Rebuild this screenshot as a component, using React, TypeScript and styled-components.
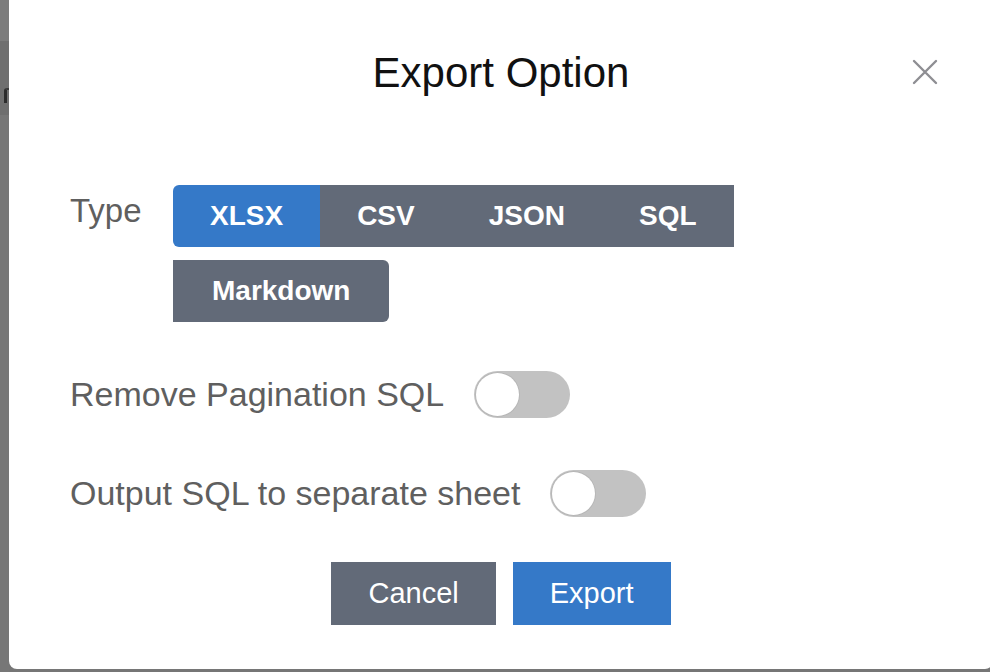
import React, { useState } from 'react';
import styled, { createGlobalStyle } from 'styled-components';

const GlobalStyle = createGlobalStyle`
  html, body {
    margin: 0;
    padding: 0;
    background: #767676;
    overflow: hidden;
  }
  * {
    box-sizing: border-box;
  }
`;

const FORMATS = ['XLSX', 'CSV', 'JSON', 'SQL', 'Markdown'];

const App = () => {
  const [format, setFormat] = useState('XLSX');
  const [removePagination, setRemovePagination] = useState(false);
  const [separateSheet, setSeparateSheet] = useState(false);

  return (
    <>
      <GlobalStyle />
      <Screen>
        {/* sliver of the page under the overlay */}
        <BackdropStrip>
          <Shade $tone="#7c7c7c" $height={41} />
          <Shade $tone="#6f6f6f" $height={74}>
            <HiddenStroke />
          </Shade>
          <Shade $tone="#777777" />
        </BackdropStrip>

        <Dialog>
          <Header>
            <Title>Export Option</Title>
            <CloseButton aria-label="Close">
              <svg width="26" height="26" viewBox="0 0 26 26" fill="none">
                <path
                  d="M2 2 24 24M24 2 2 24"
                  stroke="#8e8e93"
                  strokeWidth="2.4"
                  strokeLinecap="round"
                />
              </svg>
            </CloseButton>
          </Header>

          <Body>
            <TypeRow>
              <TypeLabel>Type</TypeLabel>
              <SegmentGroup>
                {FORMATS.map((f) => (
                  <Segment key={f} $active={f === format} onClick={() => setFormat(f)}>
                    {f}
                  </Segment>
                ))}
              </SegmentGroup>
            </TypeRow>

            <SwitchRow $top={49}>
              <FieldLabel>Remove Pagination SQL</FieldLabel>
              <Toggle
                $on={removePagination}
                onClick={() => setRemovePagination(!removePagination)}
              >
                <Knob />
              </Toggle>
            </SwitchRow>

            <SwitchRow $top={52}>
              <FieldLabel>Output SQL to separate sheet</FieldLabel>
              <Toggle $on={separateSheet} onClick={() => setSeparateSheet(!separateSheet)}>
                <Knob />
              </Toggle>
            </SwitchRow>
          </Body>

          <Footer>
            <ActionButton $variant="secondary">Cancel</ActionButton>
            <ActionButton $variant="primary">Export</ActionButton>
          </Footer>
        </Dialog>
      </Screen>
    </>
  );
};

const Screen = styled.div`
  display: flex;
  align-items: flex-start;
  height: 672px;
  overflow: hidden;
  font-family: 'Liberation Sans', Arial, sans-serif;
`;

const BackdropStrip = styled.div`
  width: 9px;
  flex-shrink: 0;
  height: 100%;
  display: flex;
  flex-direction: column;
  overflow: hidden;
`;

const Shade = styled.div<{ $tone: string; $height?: number }>`
  background: ${(p) => p.$tone};
  height: ${(p) => (p.$height ? `${p.$height}px` : 'auto')};
  flex: ${(p) => (p.$height ? '0 0 auto' : '1')};
  overflow: hidden;
`;

const HiddenStroke = styled.div`
  width: 5px;
  height: 15px;
  margin: 47px 0 0 4px;
  border-left: 3px solid #2c2c2c;
  border-top: 2px solid #3a3a3a;
  border-top-left-radius: 3px;
`;

const Dialog = styled.div`
  width: 984px;
  flex-shrink: 0;
  margin-top: -8px;
  background: #ffffff;
  border-radius: 8px;
`;

const Header = styled.div`
  position: relative;
  padding-top: 56px;
  text-align: center;
`;

const Title = styled.h2`
  margin: 0;
  font-size: 42px;
  font-weight: normal;
  line-height: 50px;
  color: #111111;
`;

const CloseButton = styled.button`
  position: absolute;
  top: 67px;
  right: 55px;
  width: 26px;
  height: 26px;
  padding: 0;
  border: none;
  background: none;
  cursor: pointer;
  display: flex;
`;

const Body = styled.div`
  padding: 87px 0 0 61px;
  display: flex;
  flex-direction: column;
`;

const TypeRow = styled.div`
  display: flex;
  align-items: flex-start;
`;

const TypeLabel = styled.span`
  width: 103px;
  padding-top: 6px;
  font-size: 33px;
  line-height: 40px;
  color: #5f5f5f;
`;

const SegmentGroup = styled.div`
  width: 580px;
  display: flex;
  flex-wrap: wrap;
  row-gap: 13px;
`;

const Segment = styled.button<{ $active: boolean }>`
  height: 62px;
  padding: 0 37px;
  border: none;
  border-radius: 0;
  background: ${(p) => (p.$active ? '#3579c8' : '#626a78')};
  color: #ffffff;
  font-family: inherit;
  font-size: 28px;
  font-weight: bold;
  cursor: pointer;

  &:first-child {
    border-radius: 6px 0 0 6px;
  }
  &:last-child {
    padding: 0 39px;
    border-radius: 0 6px 6px 0;
  }
`;

const SwitchRow = styled.div<{ $top: number }>`
  margin-top: ${(p) => p.$top}px;
  display: flex;
  align-items: center;
  gap: 30px;
  height: 47px;
`;

const FieldLabel = styled.span`
  font-size: 34px;
  line-height: 47px;
  color: #5f5f5f;
`;

const Toggle = styled.button<{ $on: boolean }>`
  width: 96px;
  height: 47px;
  padding: 2px;
  border: none;
  border-radius: 24px;
  background: ${(p) => (p.$on ? '#3579c8' : '#c2c2c2')};
  display: flex;
  align-items: center;
  justify-content: ${(p) => (p.$on ? 'flex-end' : 'flex-start')};
  cursor: pointer;
`;

const Knob = styled.span`
  width: 43px;
  height: 43px;
  border-radius: 50%;
  background: #ffffff;
  box-shadow: 0 0 0 1px rgba(0, 0, 0, 0.06);
`;

const Footer = styled.div`
  display: flex;
  justify-content: center;
  gap: 17px;
  padding: 45px 0 44px;
`;

const ActionButton = styled.button<{ $variant: 'primary' | 'secondary' }>`
  height: 63px;
  padding: 0 37px;
  border: none;
  border-radius: 0;
  background: ${(p) => (p.$variant === 'primary' ? '#3579c8' : '#626a78')};
  color: #ffffff;
  font-family: inherit;
  font-size: 29px;
  cursor: pointer;
`;

export default App;
